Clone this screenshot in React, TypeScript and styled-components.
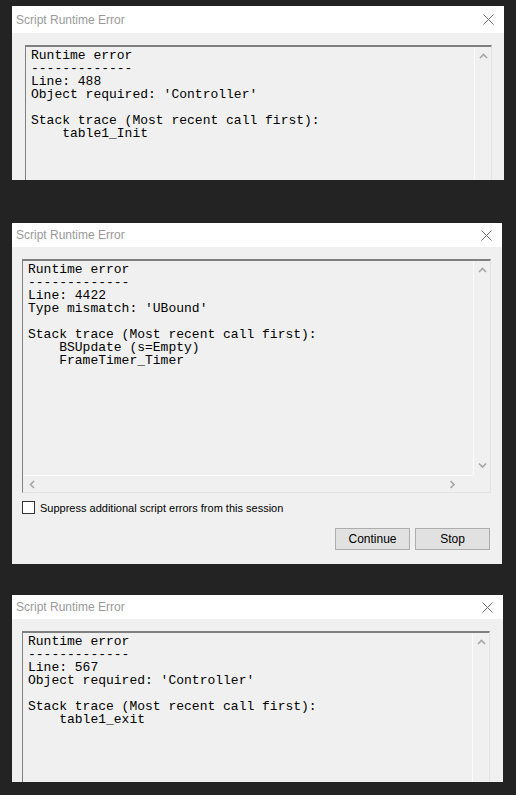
import styled, { createGlobalStyle } from "styled-components";

const GlobalStyle = createGlobalStyle`
  html, body {
    margin: 0;
    padding: 0;
    background: #232323;
  }
`;

interface DialogInfo {
  text: string;
  top: number;
  width: number;
  titleHeight: number;
  pad: [number, number, number];
  paneHeight: number;
  full?: boolean;
}

const dialogs: DialogInfo[] = [
  {
    text: `Runtime error
-------------
Line: 488
Object required: 'Controller'

Stack trace (Most recent call first):
    table1_Init`,
    top: 6,
    width: 492,
    titleHeight: 27,
    pad: [12, 12, 13],
    paneHeight: 135,
  },
  {
    text: `Runtime error
-------------
Line: 4422
Type mismatch: 'UBound'

Stack trace (Most recent call first):
    BSUpdate (s=Empty)
    FrameTimer_Timer`,
    top: 43,
    width: 490,
    titleHeight: 24,
    pad: [12, 11, 10],
    paneHeight: 234,
    full: true,
  },
  {
    text: `Runtime error
-------------
Line: 567
Object required: 'Controller'

Stack trace (Most recent call first):
    table1_exit`,
    top: 31,
    width: 491,
    titleHeight: 24,
    pad: [12, 13, 10],
    paneHeight: 151,
  },
];

export default function App(): JSX.Element {
  return (
    <>
      <GlobalStyle />
      <Page>
        {dialogs.map((d, i) => (
          <Window key={i} $top={d.top} $width={d.width}>
            <TitleBar $height={d.titleHeight}>
              <span>Script Runtime Error</span>
              <CloseIcon />
            </TitleBar>
            <Body $pad={d.pad} $full={d.full}>
              <Pane $height={d.paneHeight} $full={d.full}>
                <Output>{d.text}</Output>
                <VScroll>
                  <Chevron dir="up" />
                  {d.full && <Chevron dir="down" />}
                </VScroll>
                {d.full && (
                  <HScroll>
                    <Chevron dir="left" />
                    <Chevron dir="right" />
                  </HScroll>
                )}
                {d.full && <Corner />}
              </Pane>
              {d.full && (
                <>
                  <CheckRow>
                    <Box />
                    <Label>Suppress additional script errors from this session</Label>
                  </CheckRow>
                  <Buttons>
                    <Button>Continue</Button>
                    <Button>Stop</Button>
                  </Buttons>
                </>
              )}
            </Body>
          </Window>
        ))}
      </Page>
    </>
  );
}

function CloseIcon() {
  return (
    <svg width="11" height="11" viewBox="0 0 11 11" style={{ marginRight: 10 }}>
      <path d="M0.5 0.5 L10.5 10.5 M10.5 0.5 L0.5 10.5" stroke="#6f6f6f" strokeWidth="1" fill="none" />
    </svg>
  );
}

function Chevron({ dir }: { dir: "up" | "down" | "left" | "right" }) {
  const paths = {
    up: "M1 5 L4.5 1.5 L8 5",
    down: "M1 1.5 L4.5 5 L8 1.5",
    left: "M5 1 L1.5 4.5 L5 8",
    right: "M1.5 1 L5 4.5 L1.5 8",
  };
  const vertical = dir === "up" || dir === "down";
  return (
    <svg
      width={vertical ? 9 : 7}
      height={vertical ? 7 : 9}
      viewBox={vertical ? "0 0 9 7" : "0 0 7 9"}
    >
      <path d={paths[dir]} stroke="#a6a6a6" strokeWidth="1.6" fill="none" />
    </svg>
  );
}

const Page = styled.div`
  width: 516px;
  height: 795px;
  overflow: hidden;
  box-sizing: border-box;
  padding: 0 0 0 12px;
  display: flex;
  flex-direction: column;
  background: #232323;
`;

const Window = styled.div<{ $top: number; $width: number }>`
  margin-top: ${(p) => p.$top}px;
  width: ${(p) => p.$width}px;
  background: #f0f0f0;
  flex-shrink: 0;
`;

const TitleBar = styled.div<{ $height: number }>`
  height: ${(p) => p.$height}px;
  background: #ffffff;
  display: flex;
  align-items: center;
  justify-content: space-between;
  padding-left: 4px;
  font-family: "Liberation Sans", Arial, sans-serif;
  font-size: 12px;
  color: #9a9a9a;
`;

const Body = styled.div<{ $pad: [number, number, number]; $full?: boolean }>`
  padding: ${(p) => `${p.$pad[0]}px ${p.$pad[1]}px ${p.$full ? 14 : 0}px ${p.$pad[2]}px`};
  display: flex;
  flex-direction: column;
`;

const Pane = styled.div<{ $height: number; $full?: boolean }>`
  height: ${(p) => p.$height}px;
  box-sizing: border-box;
  border-top: 2px solid #7f7f7f;
  border-left: 1px solid #7f7f7f;
  border-right: 1px solid #e3e3e3;
  border-bottom: ${(p) => (p.$full ? "1px solid #e3e3e3" : "none")};
  display: grid;
  grid-template-columns: 1fr 17px;
  grid-template-rows: ${(p) => (p.$full ? "1fr 17px" : "1fr")};
  background: #f0f0f0;
`;

const Output = styled.pre`
  margin: 0;
  padding: 2px 5px;
  font-family: "Liberation Mono", "Courier New", monospace;
  font-size: 13px;
  line-height: 13px;
  color: #000;
  overflow: hidden;
`;

const VScroll = styled.div`
  border-left: 1px solid #fbfbfb;
  display: flex;
  flex-direction: column;
  justify-content: space-between;
  align-items: center;
  padding: 6px 0 6px;
`;

const HScroll = styled.div`
  border-top: 1px solid #fbfbfb;
  display: flex;
  justify-content: space-between;
  align-items: center;
  padding: 0 17px 0 6px;
`;

const Corner = styled.div`
  background: #f0f0f0;
`;

const CheckRow = styled.div`
  display: flex;
  align-items: center;
  gap: 5px;
  margin-top: 8px;
  height: 13px;
`;

const Box = styled.div`
  width: 13px;
  height: 13px;
  box-sizing: border-box;
  border: 1px solid #333;
  background: #fff;
`;

const Label = styled.span`
  font-family: "Liberation Sans", Arial, sans-serif;
  font-size: 11px;
  color: #000;
`;

const Buttons = styled.div`
  display: flex;
  justify-content: flex-end;
  gap: 5px;
  margin-top: 14px;
  padding-right: 1px;
`;

const Button = styled.div`
  width: 75px;
  height: 22px;
  box-sizing: border-box;
  border: 1px solid #adadad;
  background: #e1e1e1;
  display: flex;
  align-items: center;
  justify-content: center;
  font-family: "Liberation Sans", Arial, sans-serif;
  font-size: 12px;
  color: #000;
`;
